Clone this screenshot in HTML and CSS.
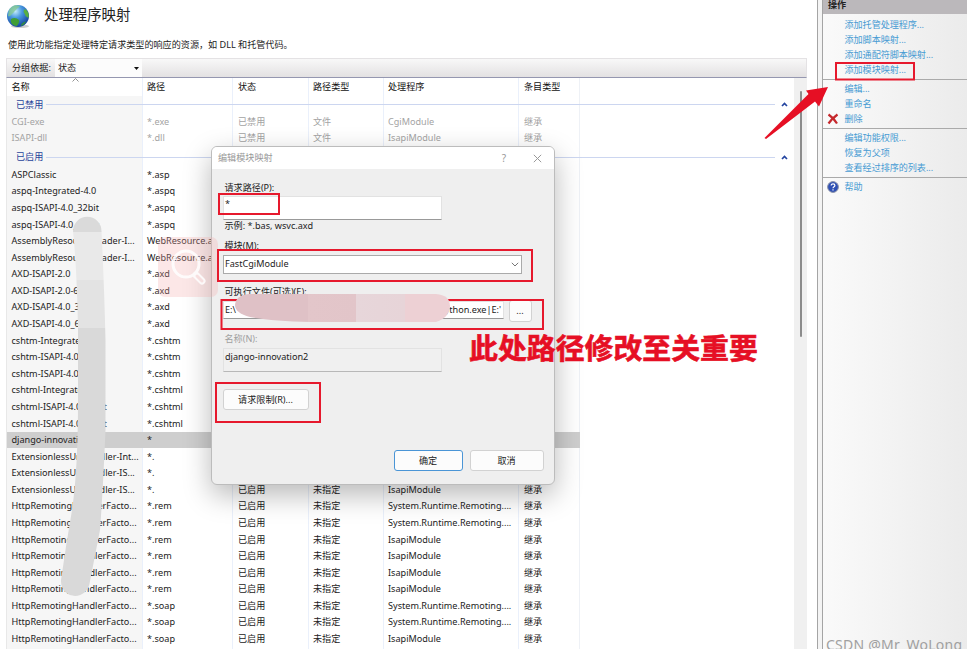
FILE: index.html
```
<!DOCTYPE html>
<html lang="zh-CN">
<head>
    <meta charset="UTF-8">
    <meta name="viewport" content="width=device-width, initial-scale=1.0">
    <title>处理程序映射</title>
    <link rel="stylesheet" href="styles.css">
</head>
<body>
    <div class="app">
        <main class="main">
            <header class="page-header">
                <svg class="globe" width="24" height="25" viewBox="0 0 24 25">
                    <defs>
                        <radialGradient id="sea" cx="38%" cy="28%" r="75%">
                            <stop offset="0" stop-color="#c4ecfb"/>
                            <stop offset="0.4" stop-color="#4a9be0"/>
                            <stop offset="1" stop-color="#123f9c"/>
                        </radialGradient>
                    </defs>
                    <ellipse cx="13" cy="22.3" rx="9" ry="1.8" fill="#bbb" opacity="0.7"/>
                    <circle cx="11" cy="12" r="11" fill="url(#sea)"/>
                    <path d="M1.500 9C1.500 5 5 1.500 9 1c1 1 3 0 4 1-1 2-3 2-4 4-2 1-2 3-4 4-1 1-2 3-4 2z" fill="#86c98c" opacity="0.75"/>
                    <path d="M4 15c3-2 6-1 8 1 1 2-1 4-2 6-4 0-7-3-6-7z" fill="#3f9e35"/>
                    <path d="M18 5c3 2 4.500 5 3.500 9l-3-2c0-2-2-3-2-5z" fill="#58b040"/>
                    <path d="M14 21c1-2 3-3.500 5-3.500-1 2-2.500 3.500-4.500 4.500z" fill="#2f8a45"/>
                </svg>
                <h1>处理程序映射</h1>
            </header>
            <p class="description">使用此功能指定处理特定请求类型的响应的资源，如 DLL 和托管代码。</p>

            <div class="toolbar">
                <span class="toolbar-label">分组依据:</span>
                <div class="group-select">
                    <span>状态</span>
                    <svg width="5" height="3" viewBox="0 0 5 3"><path d="M0 0h5L2.500 3z" fill="#111"/></svg>
                </div>
            </div>

            <div class="list">
                <div class="list-content">
                    <div class="row list-head">
                        <span class="sorted">名称
                            <svg class="sort-mark" width="7" height="4" viewBox="0 0 7 4"><path d="M.5 3.500l3-3 3 3" fill="none" stroke="#777" stroke-width="0.8"/></svg>
                        </span>
                        <span>路径</span><span>状态</span><span>路径类型</span><span>处理程序</span><span>条目类型</span>
                    </div>
                    <div id="rows"></div>
                </div>
                <div class="scrollbar"><div class="thumb"></div></div>
            </div>
        </main>

        <div class="splitter"></div>

        <aside class="actions">
            <h2>操作</h2>
            <ul>
                <li>添加托管处理程序...</li>
                <li>添加脚本映射...</li>
                <li>添加通配符脚本映射...</li>
                <li>添加模块映射...</li>
            </ul>
            <ul>
                <li>编辑...</li>
                <li>重命名</li>
                <li>
                    <svg class="action-icon" width="12" height="12" viewBox="0 0 12 12"><path d="M1.500 1.500c3 2 6 5 8.500 9M10.500 1.500C7 4 4 7 1.500 10.500" fill="none" stroke="#c5282c" stroke-width="2.200"/></svg>
                    删除
                </li>
            </ul>
            <ul>
                <li>编辑功能权限...</li>
                <li>恢复为父项</li>
                <li>查看经过排序的列表...</li>
            </ul>
            <ul>
                <li>
                    <svg class="action-icon" width="12" height="12" viewBox="0 0 12 12">
                        <circle cx="6" cy="6" r="5.400" fill="#2f50b4" stroke="#8c93a8"/>
                        <path d="M4.200 4.600c0-2.400 3.700-2.200 3.700-.1C7.900 5.800 6 5.700 6 7.200M6 8.300v1.300" fill="none" stroke="#fff" stroke-width="1.200"/>
                    </svg>
                    帮助
                </li>
            </ul>
        </aside>
    </div>

    <!-- Edit module mapping window -->
    <div class="dialog">
        <div class="dialog-title">
            <span>编辑模块映射</span>
            <span class="help">?</span>
            <svg width="9" height="9" viewBox="0 0 9 9"><path d="M.8.8l7.400 7.400M8.200.8L.8 8.200" stroke="#999" fill="none"/></svg>
        </div>
        <div class="dialog-body">
            <label class="first">请求路径(P):</label>
            <div class="field path">*</div>
            <div class="hint">示例: *.bas, wsvc.axd</div>
            <label class="module-label">模块(M):</label>
            <div class="field combo">
                <span>FastCgiModule</span>
                <svg width="8" height="5" viewBox="0 0 8 5"><path d="M.8.8L4 4 7.200.8" fill="none" stroke="#777"/></svg>
            </div>
            <label class="exe-label">可执行文件(可选)(E):</label>
            <div class="exe-row">
                <div class="field exe"><span>E:\</span><span>ython.exe|E:'</span></div>
                <button class="browse">...</button>
            </div>
            <label class="name-label">名称(N):</label>
            <div class="field name">django-innovation2</div>
            <button class="limits">请求限制(R)...</button>
            <div class="dialog-buttons">
                <button class="ok">确定</button>
                <button>取消</button>
            </div>
        </div>
    </div>

    <!-- Marks drawn over the windows -->
    <svg class="marks" width="967" height="649" viewBox="0 0 967 649">
        <defs>
            <linearGradient id="smear" gradientUnits="userSpaceOnUse" x1="0" y1="217" x2="0" y2="597">
                <stop offset="0.039" stop-color="#dadada"/>
                <stop offset="0.039" stop-color="#e9e9e9"/>
                <stop offset="0.166" stop-color="#e9e9e9"/>
                <stop offset="0.166" stop-color="#e3e3e3"/>
                <stop offset="0.292" stop-color="#e3e3e3"/>
                <stop offset="0.292" stop-color="#d9d9d9"/>
            </linearGradient>
            <linearGradient id="blush" gradientUnits="userSpaceOnUse" x1="235" y1="0" x2="450" y2="0">
                <stop offset="0.34" stop-color="#dfc1c6"/>
                <stop offset="0.34" stop-color="#e3c6ca"/>
                <stop offset="0.565" stop-color="#e2c5c9"/>
                <stop offset="0.565" stop-color="#e7d6da"/>
                <stop offset="0.79" stop-color="#e7d4d8"/>
                <stop offset="0.79" stop-color="#edd0d4"/>
            </linearGradient>
        </defs>
        <path d="M73 231a14 14 0 0 1 28.500 0Q104 280 105.500 340V430Q103 490 100 530L90 581C88 602 60 600 61 580Q66 545 72 510Q78 470 78 400V330Q77 270 73 231z" fill="url(#smear)"/>
        <rect x="158" y="237" width="60" height="60" rx="7" fill="#f5aaaa" opacity="0.28"/>
        <g fill="none" stroke="#fff" opacity="0.85">
            <circle cx="186" cy="264" r="13" stroke-width="3"/>
            <path d="M196 275l6 6" stroke-width="7" stroke-linecap="round"/>
            <path d="M197 276l5 5" stroke="#f8e0e0" stroke-width="3" stroke-linecap="round"/>
        </g>
        <g fill="none" stroke="#e6192d" stroke-width="2">
            <rect x="219" y="194" width="60" height="20"/>
            <rect x="218" y="250" width="314" height="31"/>
            <rect x="221.500" y="300" width="321.500" height="29"/>
            <rect x="216" y="383" width="104" height="39"/>
            <rect x="836" y="63" width="78" height="16.500"/>
        </g>
        <path d="M249 294H436Q450 295 450 306T436 322H310Q270 321 250 317Q235 313 235 305Q236 295 249 294z" fill="url(#blush)"/>
        <path d="M764.500 138L808.500 94 806 90.500 828 87 819 106.500 815 101.500 766 139z" fill="#e60f24"/>
    </svg>
    <div class="note">此处路径修改至关重要</div>
    <div class="watermark">CSDN @Mr_WoLong</div>

    <script>
        const enabled = "已启用";
        const disabled = "已禁用";

        // name, path, state, path type, handler
        const off = [
            ["CGI-exe", "*.exe", disabled, "文件", "CgiModule"],
            ["ISAPI-dll", "*.dll", disabled, "文件", "IsapiModule"]
        ];

        const isapi = [enabled, "未指定", "IsapiModule"];
        const remoting = [enabled, "未指定", "System.Runtime.Remoting...."];
        const http = "HttpRemotingHandlerFacto...";

        // Rows behind the window only need their first two columns
        const on = [
            ["ASPClassic", "*.asp"],
            ["aspq-Integrated-4.0", "*.aspq"],
            ["aspq-ISAPI-4.0_32bit", "*.aspq"],
            ["aspq-ISAPI-4.0_64bit", "*.aspq"],
            ["AssemblyResourceLoader-I...", "WebResource.a"],
            ["AssemblyResourceLoader-I...", "WebResource.a"],
            ["AXD-ISAPI-2.0", "*.axd"],
            ["AXD-ISAPI-2.0-64", "*.axd"],
            ["AXD-ISAPI-4.0_32bit", "*.axd"],
            ["AXD-ISAPI-4.0_64bit", "*.axd"],
            ["cshtm-Integrated-4.0", "*.cshtm"],
            ["cshtm-ISAPI-4.0_32bit", "*.cshtm"],
            ["cshtm-ISAPI-4.0_64bit", "*.cshtm"],
            ["cshtml-Integrated-4.0", "*.cshtml"],
            ["cshtml-ISAPI-4.0_32bit", "*.cshtml"],
            ["cshtml-ISAPI-4.0_64bit", "*.cshtml"],
            ["django-innovation2", "*"],
            ["ExtensionlessUrlHandler-Int...", "*."],
            ["ExtensionlessUrlHandler-IS...", "*."],
            ["ExtensionlessUrlHandler-IS...", "*.", ...isapi],
            [http, "*.rem", ...remoting],
            [http, "*.rem", ...remoting],
            [http, "*.rem", ...isapi],
            [http, "*.rem", ...isapi],
            [http, "*.rem", ...isapi],
            [http, "*.rem", ...isapi],
            [http, "*.soap", ...remoting],
            [http, "*.soap", ...remoting],
            [http, "*.soap", ...isapi]
        ];

        const rows = document.getElementById("rows");

        function addGroup(title, items, className) {
            const group = document.createElement("div");
            group.className = `group ${className}`;
            group.innerHTML = `<b>${title}</b><i></i><svg width="7" height="5" viewBox="0 0 7 5"><path d="M1 4l2.500-2.500L6 4" fill="none" stroke="#2344a0" stroke-width="1.700"/></svg>`;
            rows.appendChild(group);

            items.forEach((item) => {
                const row = document.createElement("div");
                row.className = `row ${className}`;
                if (item[0].startsWith("django")) row.classList.add("selected");
                const texts = item.length > 2 ? [...item, "继承"] : item;
                texts.forEach((text) => {
                    const cell = document.createElement("span");
                    cell.textContent = text;
                    row.appendChild(cell);
                });
                rows.appendChild(row);
            });
        }

        addGroup(disabled, off, "off");
        addGroup(enabled, on, "on");
    </script>
</body>
</html>
```

FILE: styles.css
```
* {
    box-sizing: border-box;
}

body {
    margin: 0;
    width: 967px;
    height: 649px;
    overflow: hidden;
    position: relative;
    background: #fff;
    color: #222;
    font-family: "Noto Sans", "Noto Sans CJK SC", sans-serif;
    font-size: 9.1px;
    line-height: 14px;
}

svg {
    display: block;
    flex: none;
}

.app {
    display: flex;
    height: 649px;
}

.main {
    width: 817px;
    padding-left: 6px;
    display: flex;
    flex-direction: column;
}

.page-header {
    display: flex;
    height: 36px;
    gap: 13px;
    padding: 4px 0 0 1px;
}

h1 {
    margin: 0;
    font-size: 14.4px;
    line-height: 21px;
    font-weight: 400;
}

.description {
    margin: 0;
    height: 22px;
    padding: 2px 0 0 2px;
    white-space: nowrap;
}

.toolbar {
    display: flex;
    align-items: center;
    width: 801px;
    height: 20px;
    border: 1px solid #e4e2e4;
    border-bottom: 1px solid #9597b0;
    background: linear-gradient(#f8f8f8, #e3e1e2);
}

.toolbar-label {
    width: 48px;
    padding-left: 5px;
    white-space: nowrap;
}

.group-select {
    display: flex;
    align-items: center;
    justify-content: space-between;
    width: 87px;
    height: 18px;
    padding: 0 3px 0 3px;
    background: #fcfcfc;
}

.list {
    display: flex;
    width: 801px;
    height: 571px;
    overflow: hidden;
}

.list-content {
    width: 788px;
    border-left: 1px solid #e8e8e8;
    background:
        linear-gradient(#eaf0fb, #eaf0fb) 225px 0 / 1px 100% no-repeat,
        linear-gradient(#eaf0fb, #eaf0fb) 301px 0 / 1px 100% no-repeat,
        linear-gradient(#eaf0fb, #eaf0fb) 376px 0 / 1px 100% no-repeat,
        linear-gradient(#eaf0fb, #eaf0fb) 511px 0 / 1px 100% no-repeat,
        linear-gradient(#eef1f6, #eef1f6) 572px 0 / 1px 100% no-repeat,
        linear-gradient(#f6f6f6, #f6f6f6) 0 0 / 135px 100% no-repeat,
        linear-gradient(#eaf0fb, #eaf0fb) 135px 0 / 1px 100% no-repeat;
}

.row {
    display: grid;
    grid-template-columns: 135px 91px 75px 75px 136px 61px;
    width: 573px;
    height: 16.58px;
    align-items: center;
    white-space: nowrap;
}

.row span {
    padding-left: 4.5px;
}

.row span:nth-child(n + 2) {
    padding-left: 5px;
}

.row.off {
    color: #a3a3a3;
}

.row.selected {
    background: #cecece;
}

.list-head {
    height: 18px;
    color: #111;
}

.list-head .sorted {
    height: 18px;
    padding-top: 2px;
    position: relative;
    background: #fff;
}

.sort-mark {
    position: absolute;
    left: 65px;
    top: 0;
}

.group {
    display: flex;
    align-items: center;
    height: 17.4px;
    padding-left: 9px;
    color: #28449b;
}

.group.on {
    height: 20px;
    padding-top: 1px;
}

.group b {
    font-weight: 400;
}

.group i {
    width: 729px;
    height: 1px;
    margin: 0 6px 0 3px;
    background: #ccd6f0;
    flex: none;
}

.scrollbar {
    width: 13px;
    padding: 13px 0 0 6px;
    background: #f0f0f0;
}

.thumb {
    width: 2px;
    height: 246px;
    border-radius: 1px;
    background: #8c8c8c;
}

.splitter {
    width: 6px;
    border: 1px solid #a5a5a5;
    border-width: 0 1px;
    background: #f4f4f4;
}

.actions {
    width: 144px;
    background: linear-gradient(90deg, #fafafa, #ebebeb);
}

.actions h2 {
    margin: 0;
    height: 14px;
    padding-left: 5px;
    font-size: 9.1px;
    line-height: 10px;
    font-weight: 700;
    background: #bbb8bb;
}

.actions ul {
    margin: 0;
    padding: 1.5px 0 1.5px;
    list-style: none;
    border-bottom: 1px solid #aaa;
}

.actions ul:nth-of-type(1) {
    padding-top: 3.5px;
}

.actions ul:last-child {
    border: 0;
}

.actions li {
    display: flex;
    align-items: center;
    height: 15px;
    padding-left: 21.5px;
    color: #479bd3;
    letter-spacing: -0.05px;
    white-space: nowrap;
}

.action-icon {
    margin: 0 6px 0 -18px;
}

.dialog {
    position: absolute;
    left: 211px;
    top: 146px;
    width: 344px;
    height: 339px;
    border: 1px solid #bcbcbc;
    border-radius: 6px;
    background: #efefef;
    box-shadow: 0 10px 28px rgba(0, 0, 0, 0.28);
    overflow: hidden;
}

.dialog-title {
    display: flex;
    align-items: center;
    height: 22px;
    padding: 0 12px 0 6px;
    background: #fff;
    color: #999;
}

.dialog-title .help {
    margin: 0 27px 0 auto;
    font-size: 10px;
}

.dialog-body {
    display: flex;
    flex-direction: column;
    padding: 0 10.5px;
}

.dialog-body label {
    height: 14px;
    padding-left: 2px;
}

.dialog-body .first {
    margin-top: 12px;
}

.field {
    border: 1px solid #e2e2e2;
    border-bottom-color: #999;
    background: #fff;
    padding: 0 1.5px;
    white-space: nowrap;
}

.field.path {
    width: 219px;
    height: 24px;
    margin-top: 1px;
}

.hint {
    height: 14px;
    margin-top: -1px;
    padding-left: 2px;
}

.dialog-body .module-label {
    margin-top: 6px;
}

.combo {
    display: flex;
    align-items: center;
    justify-content: space-between;
    width: 299px;
    height: 19px;
    margin-top: 2px;
    padding-bottom: 1px;
    border-color: #aaa;
}

.dialog-body .exe-label {
    margin-top: 11px;
}

.exe-row {
    display: flex;
    gap: 5px;
    margin-top: 2px;
}

.exe {
    display: flex;
    justify-content: space-between;
    width: 281px;
    height: 18px;
    padding-top: 1px;
    overflow: hidden;
}

button {
    padding: 0;
    border: 1px solid #d2d2d2;
    border-radius: 3px;
    background: #fcfcfc;
    color: #222;
    font: inherit;
}

.browse {
    width: 23px;
    height: 22px;
    margin-top: -1px;
}

.dialog-body .name-label {
    margin-top: 10px;
    color: #a0a0a0;
}

.field.name {
    width: 219px;
    height: 24px;
    margin-top: 2px;
    padding-top: 1px;
    background: #f0f0f0;
    border-bottom-color: #b8b8b8;
}

.limits {
    width: 86px;
    height: 21px;
    margin-top: 17px;
}

.dialog-buttons {
    display: flex;
    justify-content: flex-end;
    gap: 7px;
    margin-top: 40px;
}

.dialog-buttons button {
    width: 74px;
    height: 21px;
}

.dialog-buttons .ok {
    width: 69px;
    border-color: #4a95d6;
}

.marks {
    position: absolute;
    left: 0;
    top: 0;
}

.note {
    position: absolute;
    left: 469px;
    top: 329px;
    font-family: "Noto Sans CJK SC", sans-serif;
    font-size: 28.9px;
    line-height: 34px;
    font-weight: 700;
    color: #e60f24;
    -webkit-text-stroke: 0.6px #e60f24;
    white-space: nowrap;
}

.watermark {
    position: absolute;
    left: 826px;
    top: 635px;
    font-size: 14px;
    line-height: 20px;
    letter-spacing: 0.25px;
    color: #a0a0a0;
    white-space: nowrap;
}
```
